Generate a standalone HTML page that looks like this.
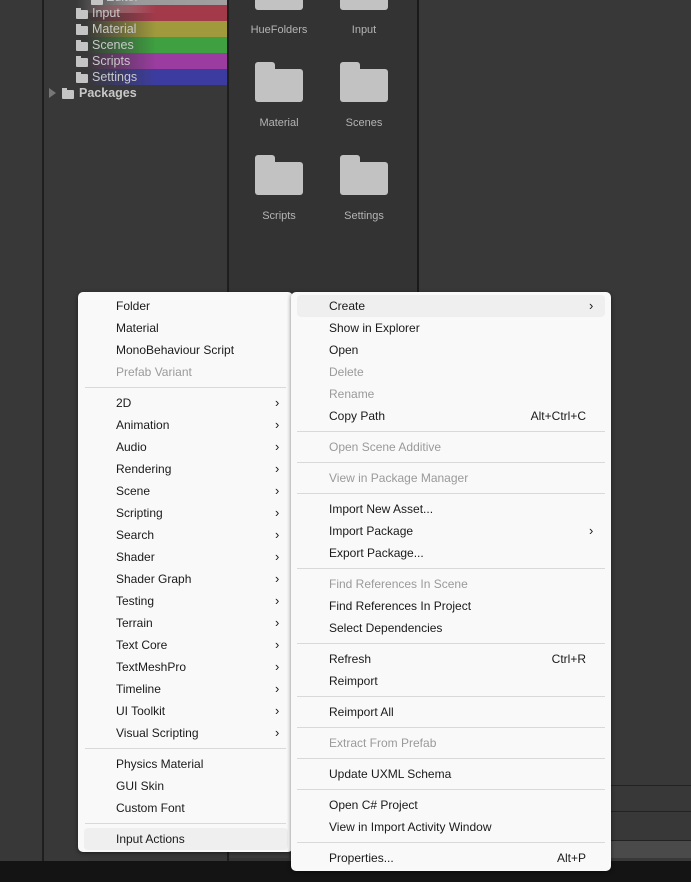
<!DOCTYPE html>
<html><head><meta charset="utf-8"><style>
*{margin:0;padding:0;box-sizing:border-box}
body{width:691px;height:882px;overflow:hidden;background:#383838;position:relative;font-family:"Liberation Sans",sans-serif;}
.a{position:absolute}
.tree{font-size:12.5px;color:#c8c8c8;height:16px;line-height:16px}
.band{position:absolute;left:76px;width:151px;height:16px}
.fi{position:absolute;width:12px;height:9px;background:#c4c4c4;border-radius:1px}
.fi:before{content:"";position:absolute;left:0;top:-2px;width:5px;height:3px;background:#c4c4c4}
.bf{position:absolute;width:48px;height:40px}
.bf:before{content:"";position:absolute;left:0;top:0;width:20px;height:10px;background:#c2c2c2;border-radius:3px 3px 0 0}
.bf:after{content:"";position:absolute;left:0;top:7px;width:48px;height:33px;background:#c2c2c2;border-radius:0 3px 3px 3px}
.lbl{position:absolute;font-size:11px;color:#b4b4b4;width:80px;text-align:center}
.menu{position:absolute;background:#f9f9f9;border-radius:5px;box-shadow:0 1px 4px rgba(0,0,0,.5)}
.it{position:relative;height:22px;line-height:22px;font-size:12px;color:#1a1a1a}
.it.d{color:#9a9a9a}
.it .k{position:absolute;right:19px;top:0}
.it .ar{position:absolute;top:0;font-size:13px}
.sep{height:9px;position:relative}
.sep:after{content:"";position:absolute;left:0;right:0;top:4px;height:1px;background:#d9d9d9}
</style></head><body>
<div class="a" style="left:0;top:0;width:43px;height:861px;background:#383838"></div>
<div class="a" style="left:42px;top:0;width:2px;height:861px;background:#1e1e1e"></div>
<div class="a" style="left:44px;top:0;width:184px;height:861px;background:#383838"></div>
<div class="a" style="left:227px;top:0;width:2px;height:861px;background:#1e1e1e"></div>
<div class="a" style="left:229px;top:0;width:189px;height:861px;background:#333"></div>
<div class="a" style="left:417px;top:0;width:2px;height:861px;background:#1a1a1a"></div>
<div class="a" style="left:419px;top:0;width:272px;height:861px;background:#383838"></div>
<div class="a" style="left:611px;top:785px;width:80px;height:1px;background:#222"></div>
<div class="a" style="left:611px;top:811px;width:80px;height:1px;background:#222"></div>
<div class="a" style="left:611px;top:840px;width:80px;height:18px;background:#4a4a4a;border-top:1px solid #222"></div>
<div class="a" style="left:229px;top:840px;width:60px;height:18px;background:#3a3a3a"></div>
<div class="a" style="left:0;top:861px;width:691px;height:21px;background:#141414"></div>

<div class="band" style="top:-3px;background:linear-gradient(90deg,rgba(150,150,150,0) 0,#9a9a9a 60px,#a0a0a0)"></div>
<div class="band" style="top:5px;background:linear-gradient(90deg,rgba(163,58,74,0) 10px,#a33a4a 80px)"></div>
<div class="band" style="top:21px;background:linear-gradient(90deg,rgba(160,154,60,0) 10px,#a09a3c 80px)"></div>
<div class="band" style="top:37px;background:linear-gradient(90deg,rgba(62,160,64,0) 10px,#3ea040 80px)"></div>
<div class="band" style="top:53px;background:linear-gradient(90deg,rgba(154,60,160,0) 10px,#9a3ca0 80px)"></div>
<div class="band" style="top:69px;background:linear-gradient(90deg,rgba(60,60,160,0) 10px,#3c3ca0 80px)"></div>
<div class="fi" style="left:91px;top:-4px"></div>
<div class="a tree" style="left:106px;top:-11px">Editor</div>
<div class="fi" style="left:76px;top:10px"></div><div class="a tree" style="left:92px;top:5px">Input</div>
<div class="fi" style="left:76px;top:26px"></div><div class="a tree" style="left:92px;top:21px">Material</div>
<div class="fi" style="left:76px;top:42px"></div><div class="a tree" style="left:92px;top:37px">Scenes</div>
<div class="fi" style="left:76px;top:58px"></div><div class="a tree" style="left:92px;top:53px">Scripts</div>
<div class="fi" style="left:76px;top:74px"></div><div class="a tree" style="left:92px;top:69px">Settings</div>
<div class="a" style="left:49px;top:88px;width:0;height:0;border-left:7px solid #777;border-top:5px solid transparent;border-bottom:5px solid transparent"></div>
<div class="fi" style="left:62px;top:90px"></div><div class="a tree" style="left:79px;top:85px;font-weight:bold">Packages</div>

<div class="bf" style="left:255px;top:-30px"></div><div class="bf" style="left:340px;top:-30px"></div>
<div class="lbl" style="left:239px;top:24px">HueFolders</div><div class="lbl" style="left:324px;top:24px">Input</div>
<div class="bf" style="left:255px;top:62px"></div><div class="bf" style="left:340px;top:62px"></div>
<div class="lbl" style="left:239px;top:117px">Material</div><div class="lbl" style="left:324px;top:117px">Scenes</div>
<div class="bf" style="left:255px;top:155px"></div><div class="bf" style="left:340px;top:155px"></div>
<div class="lbl" style="left:239px;top:210px">Scripts</div><div class="lbl" style="left:324px;top:210px">Settings</div>

<div class="menu" style="left:78px;top:292px;width:215px;height:560px;padding:3px 7px 0 7px">
<div style="padding-left:31px">
<div class="it">Folder</div><div class="it">Material</div><div class="it">MonoBehaviour Script</div><div class="it d">Prefab Variant</div>
</div>
<div class="sep"></div>
<div style="padding-left:31px">
<div class="it">2D<span class="ar" style="left:159px">›</span></div>
<div class="it">Animation<span class="ar" style="left:159px">›</span></div>
<div class="it">Audio<span class="ar" style="left:159px">›</span></div>
<div class="it">Rendering<span class="ar" style="left:159px">›</span></div>
<div class="it">Scene<span class="ar" style="left:159px">›</span></div>
<div class="it">Scripting<span class="ar" style="left:159px">›</span></div>
<div class="it">Search<span class="ar" style="left:159px">›</span></div>
<div class="it">Shader<span class="ar" style="left:159px">›</span></div>
<div class="it">Shader Graph<span class="ar" style="left:159px">›</span></div>
<div class="it">Testing<span class="ar" style="left:159px">›</span></div>
<div class="it">Terrain<span class="ar" style="left:159px">›</span></div>
<div class="it">Text Core<span class="ar" style="left:159px">›</span></div>
<div class="it">TextMeshPro<span class="ar" style="left:159px">›</span></div>
<div class="it">Timeline<span class="ar" style="left:159px">›</span></div>
<div class="it">UI Toolkit<span class="ar" style="left:159px">›</span></div>
<div class="it">Visual Scripting<span class="ar" style="left:159px">›</span></div>
</div>
<div class="sep"></div>
<div style="padding-left:31px">
<div class="it">Physics Material</div><div class="it">GUI Skin</div><div class="it">Custom Font</div>
</div>
<div class="sep"></div>
<div class="it" style="padding-left:32px;background:#efefef;border-radius:4px;margin-left:-1px;margin-right:-2px">Input Actions</div>
</div>

<div class="menu" style="left:291px;top:292px;width:320px;height:579px;padding:3px 6px 0 6px">
<div class="it" style="padding-left:32px;background:#efefef;border-radius:4px">Create<span class="ar" style="left:292px">›</span></div>
<div style="padding-left:32px">
<div class="it">Show in Explorer</div><div class="it">Open</div><div class="it d">Delete</div><div class="it d">Rename</div>
<div class="it">Copy Path<span class="k">Alt+Ctrl+C</span></div>
</div>
<div class="sep"></div>
<div class="it d" style="padding-left:32px">Open Scene Additive</div>
<div class="sep"></div>
<div class="it d" style="padding-left:32px">View in Package Manager</div>
<div class="sep"></div>
<div style="padding-left:32px">
<div class="it">Import New Asset...</div>
<div class="it">Import Package<span class="ar" style="left:260px">›</span></div>
<div class="it">Export Package...</div>
</div>
<div class="sep"></div>
<div style="padding-left:32px">
<div class="it d">Find References In Scene</div><div class="it">Find References In Project</div><div class="it">Select Dependencies</div>
</div>
<div class="sep"></div>
<div style="padding-left:32px">
<div class="it">Refresh<span class="k">Ctrl+R</span></div><div class="it">Reimport</div>
</div>
<div class="sep"></div>
<div class="it" style="padding-left:32px">Reimport All</div>
<div class="sep"></div>
<div class="it d" style="padding-left:32px">Extract From Prefab</div>
<div class="sep"></div>
<div class="it" style="padding-left:32px">Update UXML Schema</div>
<div class="sep"></div>
<div style="padding-left:32px">
<div class="it">Open C# Project</div><div class="it">View in Import Activity Window</div>
</div>
<div class="sep"></div>
<div class="it" style="padding-left:32px">Properties...<span class="k">Alt+P</span></div>
</div>
</body></html>
